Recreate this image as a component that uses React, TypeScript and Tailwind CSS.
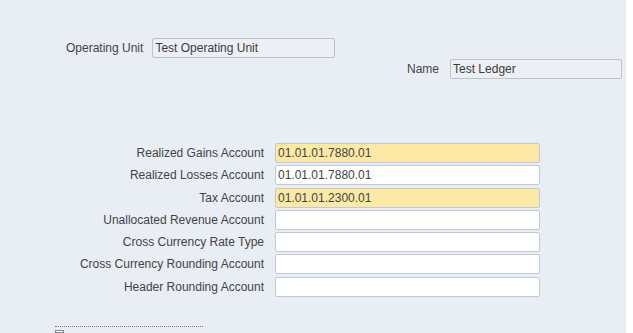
import React from "react";

const rows: { label: string; value: string; yellow: boolean }[] = [
  { label: "Realized Gains Account", value: "01.01.01.7880.01", yellow: true },
  { label: "Realized Losses Account", value: "01.01.01.7880.01", yellow: false },
  { label: "Tax Account", value: "01.01.01.2300.01", yellow: true },
  { label: "Unallocated Revenue Account", value: "", yellow: false },
  { label: "Cross Currency Rate Type", value: "", yellow: false },
  { label: "Cross Currency Rounding Account", value: "", yellow: false },
  { label: "Header Rounding Account", value: "", yellow: false },
];

export default function App() {
  return (
    <div
      className="w-[633px] h-[333px] overflow-hidden flex bg-white text-[12px] text-[#444]"
      style={{ fontFamily: '"Liberation Sans", Arial, sans-serif' }}
    >
      <div className="w-[626px] h-[333px] bg-[#e9edf4] flex flex-col">
        {/* Operating Unit */}
        <div className="flex items-center pl-[66px] mt-[38px] h-[20px]">
          <span className="leading-none">Operating Unit</span>
          <div className="ml-[9px] w-[183px] h-[20px] border border-[#bcc3cd] rounded-[2px] bg-[#eceff4] flex items-center px-[2px] leading-none text-[#3c3c3c]">
            Test Operating Unit
          </div>
        </div>
        {/* Name */}
        <div className="flex items-center pl-[407px] mt-[1px] h-[20px]">
          <span className="leading-none">Name</span>
          <div className="ml-[11px] w-[172px] h-[20px] border border-[#bcc3cd] rounded-[2px] bg-[#eceff4] flex items-center px-[2px] leading-none text-[#3c3c3c]">
            Test Ledger
          </div>
        </div>
        {/* Account rows */}
        <div className="mt-[64px] flex flex-col gap-[2.3px]">
          {rows.map((r) => (
            <div key={r.label} className="flex items-center h-[20px]">
              <div className="w-[264px] text-right leading-none">{r.label}</div>
              <div
                className={
                  "ml-[11px] w-[265px] h-[20px] border border-[#c3c9d2] rounded-[2px] flex items-center px-[2px] leading-none text-[#444] " +
                  (r.yellow ? "bg-[#fce9a6]" : "bg-white")
                }
              >
                {r.value}
              </div>
            </div>
          ))}
        </div>
        {/* bottom separator + checkbox */}
        <div className="mt-[29px] ml-[55px] w-[148px] border-t border-dotted border-[#777]" />
        <div className="ml-[55px] mt-[3px] w-[9px] h-[9px] border border-[#888] bg-white" />
      </div>
    </div>
  );
}
